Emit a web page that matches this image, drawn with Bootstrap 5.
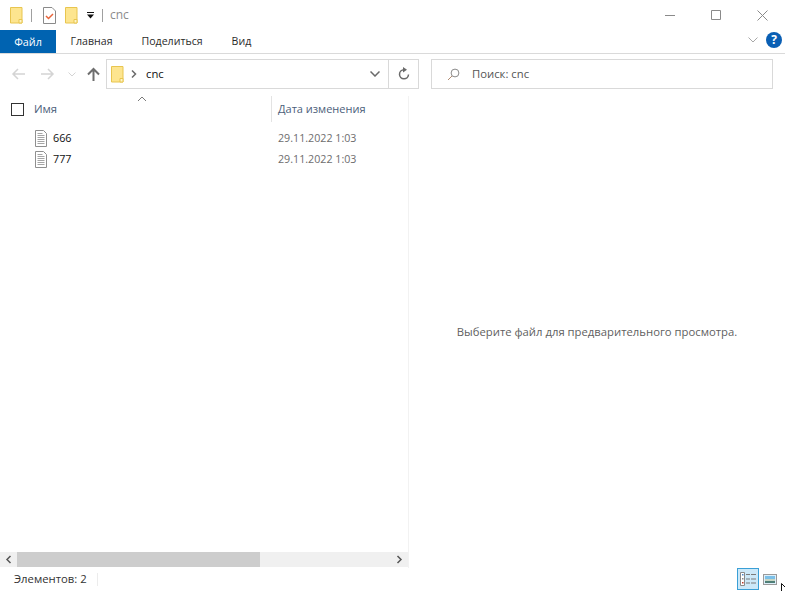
<!DOCTYPE html>
<html lang="ru">
<head>
  <meta charset="UTF-8">
  <title>cnc</title>
  <meta name="viewport" content="width=device-width, initial-scale=1">
  <link href="https://cdn.jsdelivr.net/npm/bootstrap@5.3.0/dist/css/bootstrap.min.css" rel="stylesheet">
  <style>
    html, body { height: 591px; overflow: hidden; }
    body { font-family: "Open Sans", "Noto Sans", sans-serif; font-size: 11.3px; color: #1a1a1a; background: #fff; position: relative; }
    .title-bar { height: 30px; padding-left: 10px; }
    .qa-sep { width: 1px; height: 13px; background: #a0a0a0; }
    .qa-gap-9 { margin-left: 9px; }
    .qa-gap-11 { margin-left: 11px; }
    .qa-gap-8 { margin-left: 8px; }
    .win-title { color: #8c8c8c; font-size: 12px; margin-left: 7px; }
    .win-btn { width: 46px; height: 30px; }
    .ribbon-tabs { height: 24px; border-bottom: 1px solid #dadada; }
    .ribbon-tab { height: 23px; line-height: 23px; padding: 0 14.5px; color: #2b2b2b; font-size: 10.6px; }
    .file-tab { width: 56px; background: #0063b1; color: #fff; text-align: center; padding: 0; font-size: 10.8px; }
    .help-area { margin-top: 2px; padding-right: 3px; }
    .help-dot { width: 16px; height: 16px; background: #0a5fb4; color: #fff; font-weight: 700; font-size: 12px; line-height: 16px; text-align: center; border-radius: 50%; }
    .nav-row { height: 42px; padding: 5px 12px 7px 0; }
    .nav-arrows { width: 106px; flex: none; padding-left: 11px; }
    .arrow-fwd { margin-left: 14px; }
    .arrow-drop { margin-left: 13px; }
    .arrow-up { margin-left: 11px; }
    .addr-box { height: 30px; width: 313px; border: 1px solid #d9d9d9; flex: none; padding-left: 4px; }
    .addr-sep { margin-left: 7px; }
    .addr-text { margin-left: 9px; color: #111; }
    .addr-refresh { width: 30px; height: 28px; border-left: 1px solid #d9d9d9; }
    .search-box { height: 30px; margin-left: 12px; width: 342px; border: 1px solid #d9d9d9; color: #555; padding-left: 15px; }
    .search-text { margin-left: 12px; }
    .list-pane { width: 409px; border-right: 1px solid #f2f2f2; flex: none; position: relative; }
    .col-head { height: 26px; }
    .head-check { width: 13px; height: 13px; border: 1.5px solid #333; margin-left: 11px; flex: none; }
    .head-name { width: 247px; padding-left: 10px; color: #4c607a; flex: none; }
    .head-date { border-left: 1px solid #e3e3e3; height: 26px; line-height: 26px; padding-left: 6px; color: #4c607a; font-size: 11px; }
    .sort-caret { position: absolute; left: 137px; top: 0; }
    .file-row { height: 21px; padding-left: 35px; }
    .file-name { width: 225px; margin-left: 6px; color: #111; flex: none; font-size: 10.8px; }
    .file-date { color: #6d6d6d; font-size: 10.7px; }
    .list-rows { padding-top: 6px; }
    .hscroll { height: 15px; margin-bottom: 1px; background: #f0f0f0; }
    .hscroll-btn { width: 17px; height: 15px; flex: none; }
    .hscroll-thumb { width: 243px; background: #cdcdcd; flex: none; }
    .preview-pane { color: #5f5f5f; }
    .status-bar { height: 23px; padding: 0 4px 1px 14px; color: #333; }
    .status-sep { width: 1px; height: 13px; background: #ececec; margin-left: 10px; }
    .view-on { width: 22px; height: 22px; background: #cce8f8; border: 1px solid #3a9fd6; }
    .view-off { width: 22px; height: 22px; }
    .mouse-pointer { position: absolute; left: 781px; top: 583px; }
  </style>
</head>
<body class="d-flex flex-column">

  <!-- title bar -->
  <div class="title-bar d-flex align-items-center flex-shrink-0">
    <svg width="13" height="17" viewBox="0 0 13 17"><path d="M.5.500h11.500v15.500H.5z" fill="#fde58f" stroke="#e8c54f"/><path d="M9 12.500h3v3.500H9z" fill="#fff5c8" stroke="#e8c54f"/></svg>
    <span class="qa-sep qa-gap-8"></span>
    <svg class="qa-gap-11" width="13" height="17" viewBox="0 0 13 17"><path d="M.5.500h8.500l3.500 3.500v12.500H.5z" fill="#fff" stroke="#8a8a8a"/><path d="M3 9l2.500 2.500L10 7" fill="none" stroke="#e8643a" stroke-width="1.500"/></svg>
    <svg class="qa-gap-9" width="13" height="17" viewBox="0 0 13 17"><path d="M.5.500h11.500v15.500H.5z" fill="#fde58f" stroke="#e8c54f"/><path d="M9 12.500h3v3.500H9z" fill="#fff5c8" stroke="#e8c54f"/></svg>
    <svg class="qa-gap-9" width="7" height="7" viewBox="0 0 7 7"><path d="M0 .5h7" stroke="#111"/><path d="M0 2.500h7L3.500 6.500z" fill="#111"/></svg>
    <span class="qa-sep qa-gap-8"></span>
    <span class="win-title">cnc</span>
    <div class="ms-auto d-flex">
      <div class="win-btn d-flex align-items-center justify-content-center"><svg width="10" height="10"><path d="M0 5.500h10" stroke="#8a8a8a"/></svg></div>
      <div class="win-btn d-flex align-items-center justify-content-center"><svg width="10" height="10"><path d="M.5.500h9v9h-9z" fill="none" stroke="#8a8a8a"/></svg></div>
      <div class="win-btn d-flex align-items-center justify-content-center"><svg width="11" height="11"><path d="M.5.500l10 10M10.500.500l-10 10" stroke="#8a8a8a"/></svg></div>
    </div>
  </div>

  <!-- ribbon tabs -->
  <div class="ribbon-tabs d-flex align-items-start flex-shrink-0">
    <div class="ribbon-tab file-tab">Файл</div>
    <div class="ribbon-tab">Главная</div>
    <div class="ribbon-tab">Поделиться</div>
    <div class="ribbon-tab">Вид</div>
    <div class="help-area ms-auto d-flex align-items-center gap-2">
      <svg width="10" height="6" viewBox="0 0 10 6"><path d="M.5.500L5 5 9.500.500" fill="none" stroke="#a8a8a8"/></svg>
      <div class="help-dot">?</div>
    </div>
  </div>

  <!-- address row -->
  <div class="nav-row d-flex align-items-center flex-shrink-0">
    <div class="nav-arrows d-flex align-items-center">
      <svg width="15" height="14" viewBox="0 0 15 14"><path d="M14 7H2M7 2L2 7l5 5" fill="none" stroke="#d4d4d4" stroke-width="1.500"/></svg>
      <svg class="arrow-fwd" width="15" height="14" viewBox="0 0 15 14"><path d="M1 7h12M8 2l5 5-5 5" fill="none" stroke="#d4d4d4" stroke-width="1.500"/></svg>
      <svg class="arrow-drop" width="8" height="5" viewBox="0 0 8 5"><path d="M.5.500L4 4 7.500.500" fill="none" stroke="#d4d4d4"/></svg>
      <svg class="arrow-up" width="13" height="14" viewBox="0 0 13 14"><path d="M6.500 14V2M1 7.500L6.500 2 12 7.500" fill="none" stroke="#6e6e6e" stroke-width="2"/></svg>
    </div>
    <div class="addr-box d-flex align-items-center">
      <svg width="13" height="17" viewBox="0 0 13 17"><path d="M.5.500h11.500v15.500H.5z" fill="#fde58f" stroke="#e8c54f"/><path d="M9 12.500h3v3.500H9z" fill="#fff5c8" stroke="#e8c54f"/></svg>
      <svg class="addr-sep" width="6" height="8" viewBox="0 0 6 8"><path d="M1 .500L4.500 4 1 7.500" fill="none" stroke="#6a6a6a" stroke-width="1.500"/></svg>
      <span class="addr-text">cnc</span>
      <svg class="ms-auto me-2" width="10" height="6" viewBox="0 0 10 6"><path d="M.5.500L5 5 9.500.500" fill="none" stroke="#6a6a6a" stroke-width="1.500"/></svg>
      <div class="addr-refresh d-flex align-items-center justify-content-center">
        <svg width="14" height="14" viewBox="0 0 14 14"><path d="M11.500 7.500A4.500 4.500 0 1 1 7 2.800" fill="none" stroke="#6a6a6a" stroke-width="1.500"/><path d="M6 0l4 2.800L6 5.500z" fill="#6a6a6a"/></svg>
      </div>
    </div>
    <div class="search-box d-flex align-items-center">
      <svg width="13" height="13" viewBox="0 0 13 13"><circle cx="8" cy="5" r="3.900" fill="none" stroke="#8a8a8a"/><path d="M5 8l-4 4" stroke="#b08a70"/></svg>
      <span class="search-text">Поиск: cnc</span>
    </div>
  </div>

  <!-- panes -->
  <div class="d-flex flex-grow-1 overflow-hidden">
    <div class="list-pane d-flex flex-column">
      <svg class="sort-caret" width="10" height="6" viewBox="0 0 10 6"><path d="M1 5L5 1l4 4" fill="none" stroke="#7a7a7a"/></svg>
      <div class="col-head d-flex align-items-center">
        <div class="head-check"></div>
        <div class="head-name">Имя</div>
        <div class="head-date flex-grow-1">Дата изменения</div>
      </div>
      <div class="list-rows flex-grow-1">
        <div class="file-row d-flex align-items-center">
          <svg width="12" height="17" viewBox="0 0 12 17"><path d="M.5.500h8l3 3v13H.5z" fill="#fff" stroke="#8f8f8f"/><path d="M2.500 3.500h5M2.500 5.500h7M2.500 7.500h7M2.500 9.500h7M2.500 11.500h7M2.500 13.500h7" stroke="#a5a5a5"/></svg>
          <span class="file-name">666</span>
          <span class="file-date">29.11.2022 1:03</span>
        </div>
        <div class="file-row d-flex align-items-center">
          <svg width="12" height="17" viewBox="0 0 12 17"><path d="M.5.500h8l3 3v13H.5z" fill="#fff" stroke="#8f8f8f"/><path d="M2.500 3.500h5M2.500 5.500h7M2.500 7.500h7M2.500 9.500h7M2.500 11.500h7M2.500 13.500h7" stroke="#a5a5a5"/></svg>
          <span class="file-name">777</span>
          <span class="file-date">29.11.2022 1:03</span>
        </div>
      </div>
      <div class="hscroll d-flex">
        <div class="hscroll-btn d-flex align-items-center justify-content-center"><svg width="7" height="9" viewBox="0 0 7 9"><path d="M5.500 1L2 4.500 5.500 8" fill="none" stroke="#555" stroke-width="1.500"/></svg></div>
        <div class="hscroll-thumb"></div>
        <div class="hscroll-btn ms-auto d-flex align-items-center justify-content-center"><svg width="7" height="9" viewBox="0 0 7 9"><path d="M1.500 1L5 4.500 1.500 8" fill="none" stroke="#555" stroke-width="1.500"/></svg></div>
      </div>
    </div>
    <div class="preview-pane flex-grow-1 d-flex align-items-center justify-content-center">
      Выберите файл для предварительного просмотра.
    </div>
  </div>

  <!-- status bar -->
  <div class="status-bar d-flex align-items-center flex-shrink-0">
    <span>Элементов: 2</span>
    <span class="status-sep"></span>
    <div class="ms-auto d-flex align-items-center">
      <div class="view-on d-flex align-items-center justify-content-center">
        <svg width="16" height="14" viewBox="0 0 16 14"><path d="M.5.500h4v13h-4z" fill="#fff" stroke="#8a8a8a"/><path d="M2 2h1.500v1.500H2z" fill="#4a86c8"/><path d="M2 6h1.500v1.500H2z" fill="#888"/><path d="M2 10h1.500v1.500H2z" fill="#c0392b"/><path d="M6 2.500h4M11 2.500h5M6 7h4M11 7h5M6 11h4M11 11h5" stroke="#7a7a7a"/></svg>
      </div>
      <div class="view-off d-flex align-items-center justify-content-center">
        <svg width="14" height="11" viewBox="0 0 14 11"><rect x=".5" y=".5" width="13" height="10" fill="#dff0fa" stroke="#9a9a9a"/><path d="M2 2h10v3H2z" fill="#7cc0e8"/><path d="M2 5h10v2H2z" fill="#c9d6c4"/><path d="M2 7h10v2H2z" fill="#4f7f78"/></svg>
      </div>
    </div>
  </div>
  <svg class="mouse-pointer" width="4" height="8" viewBox="0 0 4 8"><path d="M.5 8V.5L4 4" fill="none" stroke="#111"/></svg>

  <script src="https://cdn.jsdelivr.net/npm/bootstrap@5.3.0/dist/js/bootstrap.bundle.min.js"></script>
</body>
</html>
